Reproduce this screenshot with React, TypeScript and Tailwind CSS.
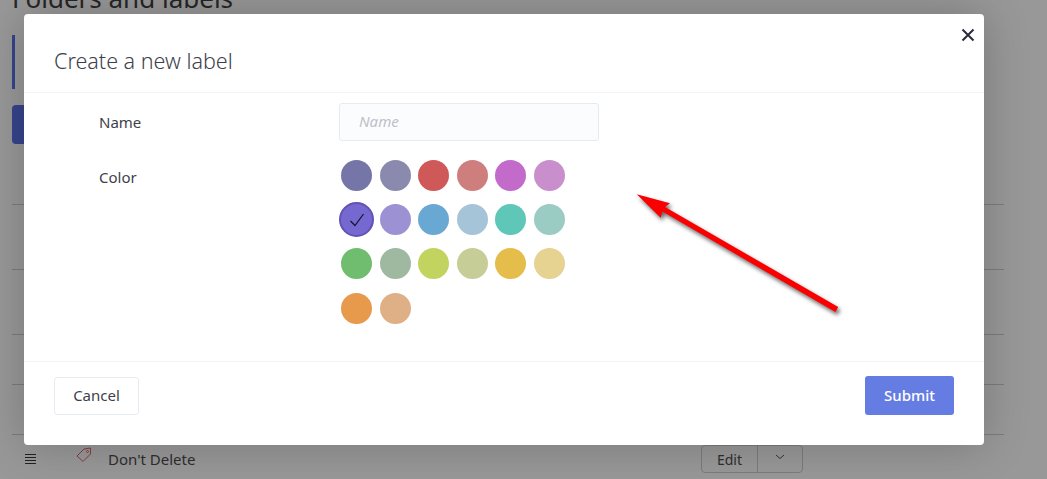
const FONT = "font-['Noto_Sans','Open_Sans',sans-serif]";

const ROWS = [
  ["#7575a8", "#8a8aae", "#cf5858", "#cf7e7e", "#c26bcb", "#c98fcc"],
  ["#7569d1", "#9b91d3", "#69a8d3", "#a6c4d8", "#5ec7b7", "#9accc3"],
  ["#70bd70", "#9fb9a0", "#c2d35f", "#c6cd96", "#e5bd4a", "#e6d291"],
  ["#e79a4b", "#dfb085"],
];

function Swatch({ color, selected }: { color: string; selected?: boolean }) {
  return (
    <div className="flex items-center justify-center">
      {selected ? (
        <div
          className="flex h-[35px] w-[35px] items-center justify-center rounded-full border-2 border-[#5f53b5]"
          style={{ backgroundColor: color }}
        >
          <svg width="16" height="14" viewBox="0 0 16 14" fill="none" stroke="#14142b" strokeWidth="1.2">
            <path d="M1.5 8 L6 12.5 L14.5 1" />
          </svg>
        </div>
      ) : (
        <div className="h-[31px] w-[31px] rounded-full" style={{ backgroundColor: color }} />
      )}
    </div>
  );
}

function Arrow() {
  return (
    <svg
      className="absolute left-[610px] top-[170px] drop-shadow-[2px_3px_2px_rgba(0,0,0,0.6)]"
      width="245"
      height="160"
      viewBox="610 170 245 160"
      fill="#fb0000"
    >
      <path d="M636.7 194.3 L670 203.3 L665 207 L838.2 307 L835.4 312 L662.4 211.5 L660.7 217.7 Z" />
    </svg>
  );
}

export default function App() {
  return (
    <div className={`relative h-[479px] w-[1047px] overflow-hidden bg-[#989898] ${FONT}`}>
      {/* dimmed page behind the dialog */}
      <div className="flex h-full flex-col pl-3 pr-[43px]">
        <div className="-mt-[20px] h-[41px] text-[26px] leading-[36px] text-[#262626]">Folders and labels</div>
        <div className="mt-[14px] h-[54px] w-[3px] bg-[#36448c]" />
        <div className="mt-4 h-[39px] w-[120px] rounded bg-[#36448c]" />
        <div className="mt-[60px] h-[65px] border-t border-[#7c7c7c]" />
        <div className="h-[65px] border-t border-[#7c7c7c]" />
        <div className="h-[50px] border-t border-[#7c7c7c]" />
        <div className="h-[50px] border-t border-[#7c7c7c]" />
        <div className="flex h-[44px] items-center border-t border-[#7c7c7c] pt-[5px] text-[15px] text-[#2e2e2e]">
          <svg className="ml-[13px]" width="11" height="10" viewBox="0 0 11 10" stroke="#222" strokeWidth="1">
            <path d="M0 .5H11M0 3.5H11M0 6.5H11M0 9.5H11" />
          </svg>
          <svg className="ml-[40px] -mt-[8px]" width="16" height="16" viewBox="0 0 16 16" fill="none" stroke="#8e3a44" strokeWidth="1">
            <path d="M1 9 L8 2 L14.5 1 L14.5 7 L7 14.5 Z" />
            <circle cx="11.5" cy="4.5" r="1" />
          </svg>
          <span className="ml-4">Don't Delete</span>
          <div className="ml-auto mr-[201px] flex h-[28px] w-[102px] items-center rounded border border-[#7c7c7c]">
            <span className="flex h-full w-[56px] items-center justify-center border-r border-[#7c7c7c] text-[14px]">Edit</span>
            <svg className="ml-[17px] -mt-1" width="10" height="6" viewBox="0 0 10 6" fill="none" stroke="#333" strokeWidth="1">
              <path d="M1 1 L5 4.5 L9 1" />
            </svg>
          </div>
        </div>
      </div>

      {/* dialog */}
      <div className="absolute left-6 top-[14px] flex h-[431px] w-[960px] flex-col rounded bg-white shadow-[0_0_45px_rgba(0,0,0,0.22)]">
        <div className="flex h-[79px] items-center justify-between border-b border-[#f3f3f6] pl-[30px] pr-[9px]">
          <h2 className="mt-[15px] text-[21.5px] font-light leading-7 text-[#3e3f4a]">Create a new label</h2>
          <svg className="-mt-[36px]" width="14" height="14" viewBox="0 0 14 14" stroke="#2a2b3a" strokeWidth="2">
            <path d="M1.5 1.5 L12.5 12.5 M12.5 1.5 L1.5 12.5" />
          </svg>
        </div>

        <div className="flex h-[269px] border-b border-[#f3f3f6] pt-[10px]">
          <div className="w-[315px] pl-[75px] text-[15px] text-[#3e3f4a]">
            <div className="flex h-[38px] items-center">Name</div>
            <div className="mt-[17px] flex h-[38px] items-center">Color</div>
          </div>
          <div className="w-[260px]">
            <input
              placeholder="Name"
              className="h-[38px] w-full rounded-[3px] border border-[#e6ebf2] bg-[#fbfcfe] px-[19px] pb-0.5 text-[15px] italic outline-none placeholder:text-[#bfc0c8]"
            />
            <div className="-ml-[1.4px] mt-[12px] grid w-[231px] grid-cols-[repeat(6,38.5px)] auto-rows-[44.4px]">
              {ROWS.flat().map((c, i) => (
                <Swatch key={i} color={c} selected={i === 6} />
              ))}
            </div>
          </div>
        </div>

        <div className="flex items-center justify-between px-[30px] pt-[14px]">
          <button className="h-[38px] w-[85px] rounded-[3px] border border-[#e6ebf2] bg-white text-[15px] text-[#3e3f4a]">Cancel</button>
          <button className="h-[39px] w-[89px] rounded-[3px] bg-[#657de3] text-[15px] font-medium text-white">Submit</button>
        </div>
      </div>

      <Arrow />
    </div>
  );
}
